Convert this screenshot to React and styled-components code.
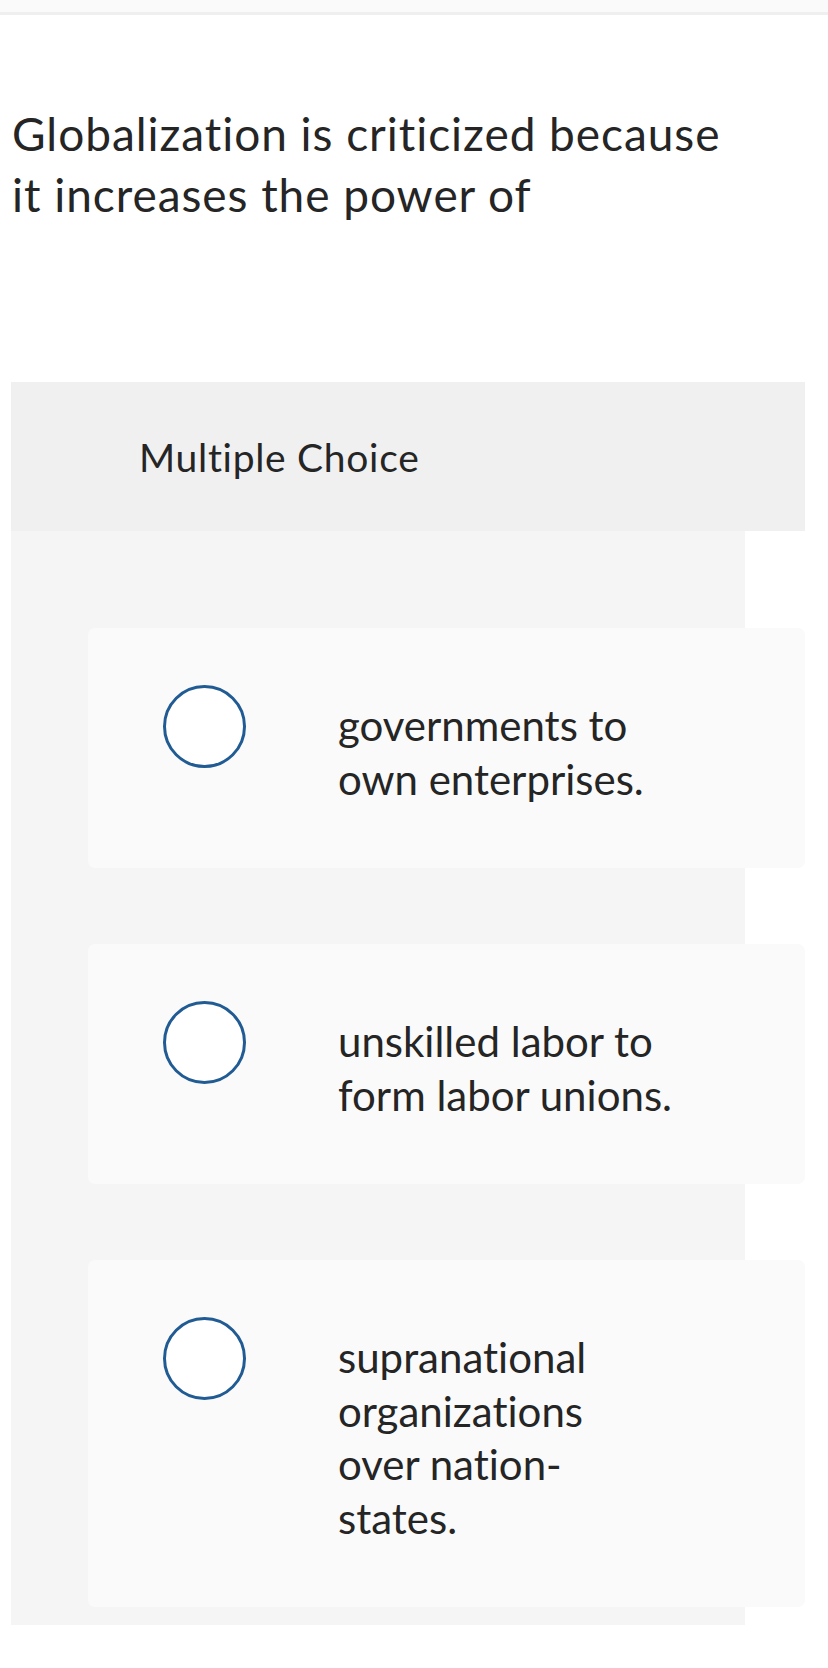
import React from 'react';
import styled, { createGlobalStyle } from 'styled-components';

const GlobalStyle = createGlobalStyle`
  html, body {
    margin: 0;
    padding: 0;
    background: #fff;
  }
  body {
    font-family: Lato, "Open Sans", sans-serif;
    font-variant-ligatures: none;
    color: #252525;
  }
`;

const Page = styled.div`
  width: 828px;
  min-height: 1668px;
  background: #fff;
`;

const TopBar = styled.div`
  height: 12px;
  background: #fafafa;
  border-bottom: 3px solid #efefef;
`;

const Question = styled.h1`
  margin: 88px 0 0;
  padding-left: 12px;
  width: 720px;
  font-weight: 400;
  font-size: 46px;
  line-height: 61px;
  letter-spacing: 0.95px;
`;

const Panel = styled.section`
  margin: 157px 0 0 11px;
  width: 794px;
`;

const PanelHeader = styled.div`
  height: 149px;
  display: flex;
  align-items: center;
  padding-left: 128px;
  background: #f0f0f0;
  font-size: 39px;
  letter-spacing: 0.7px;
`;

const Choices = styled.div`
  width: 734px;
  box-sizing: border-box;
  padding: 97px 0 18px 77px;
  background: #f5f5f5;
  display: flex;
  flex-direction: column;
  gap: 76px;
`;

const Choice = styled.label`
  width: 717px;
  box-sizing: border-box;
  display: flex;
  align-items: flex-start;
  padding: 57px 0 62px 75px;
  background: #fafafa;
  border-radius: 7px;
  cursor: pointer;
`;

const Radio = styled.span`
  flex: none;
  width: 77px;
  height: 77px;
  border: 3px solid #215b93;
  border-radius: 50%;
  background: #fff;
`;

const ChoiceText = styled.span`
  margin: 14px 0 0 92px;
  width: 334px;
  font-size: 42px;
  line-height: 53.5px;
`;

const options = [
  'governments to own enterprises.',
  'unskilled labor to form labor unions.',
  'supranational organizations over nation-states.',
];

export default function App() {
  return (
    <Page>
      <GlobalStyle />
      <TopBar />
      <Question>Globalization is criticized because it increases the power of</Question>
      <Panel>
        <PanelHeader>Multiple Choice</PanelHeader>
        <Choices>
          {options.map((text) => (
            <Choice key={text}>
              <Radio />
              <ChoiceText>{text}</ChoiceText>
            </Choice>
          ))}
        </Choices>
      </Panel>
    </Page>
  );
}
